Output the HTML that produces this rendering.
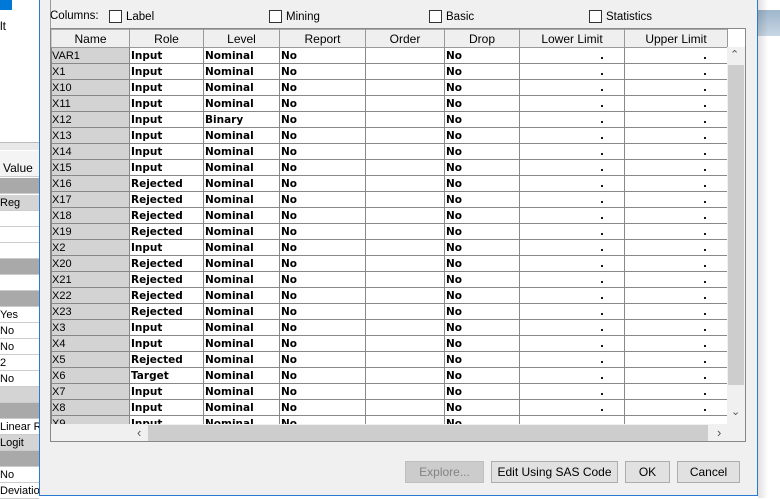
<!DOCTYPE html>
<html><head><meta charset="utf-8"><style>
*{margin:0;padding:0;box-sizing:border-box}
body{width:780px;height:498px;overflow:hidden;background:#fff;font-family:"Liberation Sans",sans-serif;font-size:11px;position:relative}
.a{position:absolute}
.lp div{position:absolute;left:0;width:39px;height:16px;font-size:11px;line-height:16px;border-bottom:1px solid #ccc;white-space:nowrap;overflow:hidden}
.dg{background:#a9a9a9}.lg{background:#d4d4d4}
table{border-collapse:collapse;table-layout:fixed;position:absolute;left:51px;top:29px}
td,th{height:16px;border:1px solid #888;padding:0 1px;font-size:11px;line-height:14px;white-space:nowrap;overflow:hidden}
th{background:#efefef;font-weight:normal;height:18px;border-color:#aaa #999 #999 #ccc;font-size:12px}
td{background:#fff;font-weight:bold;font-family:"DejaVu Sans","Liberation Sans",sans-serif;font-size:10.5px}
td.n{background:#d3d3d3;font-weight:normal;font-family:"Liberation Sans",sans-serif;font-size:11px;padding-left:0}
td.d{text-align:right;padding-right:20px}
.cb{display:inline-block;width:13px;height:13px;border:1px solid #333;background:#fff;vertical-align:-3px;margin-right:4px}
.btn{position:absolute;top:461px;height:22px;border:1px solid #adadad;background:#e1e1e1;font-size:12px;text-align:center;line-height:20px}
</style></head><body>
<div class="a" style="left:0;top:0;width:12px;height:10px;background:#0078d7"></div>
<div class="a" style="left:0;top:19px;font-size:12px">lt</div>
<div class="a" style="left:0;top:142px;width:39px;height:8px;background:#e8e8e8;border-top:1px solid #bbb"></div>
<div class="a" style="left:0;top:151px;width:39px;height:26px;background:#f4f4f4;border-bottom:1px solid #ccc;font-size:12px;line-height:34px;padding-left:3px">Value</div>
<div class="lp">
<div class="dg" style="top:178px"></div>
<div class="lg" style="top:195px">Reg</div>
<div style="top:211px"></div><div style="top:227px"></div><div style="top:243px"></div>
<div class="dg" style="top:259px"></div>
<div style="top:275px"></div>
<div class="dg" style="top:291px"></div>
<div style="top:307px">Yes</div><div style="top:323px">No</div><div style="top:339px">No</div><div style="top:355px">2</div><div style="top:371px">No</div>
<div class="lg" style="top:387px"></div>
<div class="dg" style="top:403px"></div>
<div style="top:419px">Linear Re</div>
<div class="lg" style="top:435px">Logit</div>
<div class="dg" style="top:451px"></div>
<div style="top:467px">No</div>
<div style="top:483px">Deviation</div>
</div>
<div class="a" style="left:758px;top:10px;width:22px;height:26px;background:linear-gradient(#9fb6cc,#c8d6e4)"></div>
<div class="a" style="left:758px;top:0;width:10px;height:498px;background:linear-gradient(90deg,rgba(0,0,0,.12),rgba(0,0,0,0))"></div>
<div class="a" style="left:39px;top:0;width:719px;height:496px;background:#f0f0f0;border:1px solid #2b79d0;border-top:none"></div>
<div class="a" style="left:50px;top:0;width:1px;height:28px;background:#999"></div>
<div class="a" style="left:50px;top:10px;font-size:11.5px">Columns:</div>
<div class="a" style="left:109px;top:10px;font-size:11.5px"><span class="cb"></span>Label</div>
<div class="a" style="left:269px;top:10px;font-size:11.5px"><span class="cb"></span>Mining</div>
<div class="a" style="left:429px;top:10px;font-size:11.5px"><span class="cb"></span>Basic</div>
<div class="a" style="left:589px;top:10px;font-size:11.5px"><span class="cb"></span>Statistics</div>
<div class="a" style="left:50px;top:28px;width:696px;height:414px;border:1px solid #888;background:#fff;overflow:hidden">
<table style="left:0;top:0">
<colgroup><col style="width:78px"><col style="width:74px"><col style="width:76px"><col style="width:86px"><col style="width:79px"><col style="width:75px"><col style="width:105px"><col style="width:103px"></colgroup>
<tr><th>Name</th><th>Role</th><th>Level</th><th>Report</th><th>Order</th><th>Drop</th><th>Lower Limit</th><th>Upper Limit</th></tr>
<tr><td class="n">VAR1</td><td>Input</td><td>Nominal</td><td>No</td><td></td><td>No</td><td class="d">.</td><td class="d">.</td></tr>
<tr><td class="n">X1</td><td>Input</td><td>Nominal</td><td>No</td><td></td><td>No</td><td class="d">.</td><td class="d">.</td></tr>
<tr><td class="n">X10</td><td>Input</td><td>Nominal</td><td>No</td><td></td><td>No</td><td class="d">.</td><td class="d">.</td></tr>
<tr><td class="n">X11</td><td>Input</td><td>Nominal</td><td>No</td><td></td><td>No</td><td class="d">.</td><td class="d">.</td></tr>
<tr><td class="n">X12</td><td>Input</td><td>Binary</td><td>No</td><td></td><td>No</td><td class="d">.</td><td class="d">.</td></tr>
<tr><td class="n">X13</td><td>Input</td><td>Nominal</td><td>No</td><td></td><td>No</td><td class="d">.</td><td class="d">.</td></tr>
<tr><td class="n">X14</td><td>Input</td><td>Nominal</td><td>No</td><td></td><td>No</td><td class="d">.</td><td class="d">.</td></tr>
<tr><td class="n">X15</td><td>Input</td><td>Nominal</td><td>No</td><td></td><td>No</td><td class="d">.</td><td class="d">.</td></tr>
<tr><td class="n">X16</td><td>Rejected</td><td>Nominal</td><td>No</td><td></td><td>No</td><td class="d">.</td><td class="d">.</td></tr>
<tr><td class="n">X17</td><td>Rejected</td><td>Nominal</td><td>No</td><td></td><td>No</td><td class="d">.</td><td class="d">.</td></tr>
<tr><td class="n">X18</td><td>Rejected</td><td>Nominal</td><td>No</td><td></td><td>No</td><td class="d">.</td><td class="d">.</td></tr>
<tr><td class="n">X19</td><td>Rejected</td><td>Nominal</td><td>No</td><td></td><td>No</td><td class="d">.</td><td class="d">.</td></tr>
<tr><td class="n">X2</td><td>Input</td><td>Nominal</td><td>No</td><td></td><td>No</td><td class="d">.</td><td class="d">.</td></tr>
<tr><td class="n">X20</td><td>Rejected</td><td>Nominal</td><td>No</td><td></td><td>No</td><td class="d">.</td><td class="d">.</td></tr>
<tr><td class="n">X21</td><td>Rejected</td><td>Nominal</td><td>No</td><td></td><td>No</td><td class="d">.</td><td class="d">.</td></tr>
<tr><td class="n">X22</td><td>Rejected</td><td>Nominal</td><td>No</td><td></td><td>No</td><td class="d">.</td><td class="d">.</td></tr>
<tr><td class="n">X23</td><td>Rejected</td><td>Nominal</td><td>No</td><td></td><td>No</td><td class="d">.</td><td class="d">.</td></tr>
<tr><td class="n">X3</td><td>Input</td><td>Nominal</td><td>No</td><td></td><td>No</td><td class="d">.</td><td class="d">.</td></tr>
<tr><td class="n">X4</td><td>Input</td><td>Nominal</td><td>No</td><td></td><td>No</td><td class="d">.</td><td class="d">.</td></tr>
<tr><td class="n">X5</td><td>Rejected</td><td>Nominal</td><td>No</td><td></td><td>No</td><td class="d">.</td><td class="d">.</td></tr>
<tr><td class="n">X6</td><td>Target</td><td>Nominal</td><td>No</td><td></td><td>No</td><td class="d">.</td><td class="d">.</td></tr>
<tr><td class="n">X7</td><td>Input</td><td>Nominal</td><td>No</td><td></td><td>No</td><td class="d">.</td><td class="d">.</td></tr>
<tr><td class="n">X8</td><td>Input</td><td>Nominal</td><td>No</td><td></td><td>No</td><td class="d">.</td><td class="d">.</td></tr>
<tr><td class="n">X9</td><td>Input</td><td>Nominal</td><td>No</td><td></td><td>No</td><td class="d">.</td><td class="d">.</td></tr>
</table>
<div class="a" style="left:676px;top:18px;width:18px;height:377px;background:#f0f0f0"></div>
<div class="a" style="left:677px;top:36px;width:16px;height:320px;background:#cdcdcd"></div>
<div class="a" style="left:679px;top:19px;font-size:11px;color:#555">&#8963;</div>
<div class="a" style="left:680px;top:376px;font-size:11px;color:#555">&#8964;</div>
<div class="a" style="left:0;top:395px;width:694px;height:18px;background:#f0f0f0"></div>
<div class="a" style="left:97px;top:396px;width:560px;height:16px;background:#cdcdcd"></div>
<div class="a" style="left:86px;top:396px;font-size:13px;color:#555">&lsaquo;</div>
<div class="a" style="left:666px;top:396px;font-size:13px;color:#555">&rsaquo;</div>
</div>
<div class="btn" style="left:405px;width:79px;color:#838383;background:#cccccc;border-color:#bfbfbf">Explore...</div>
<div class="btn" style="left:491px;width:127px">Edit Using SAS Code</div>
<div class="btn" style="left:625px;width:45px">OK</div>
<div class="btn" style="left:677px;width:63px">Cancel</div>
</body></html>
